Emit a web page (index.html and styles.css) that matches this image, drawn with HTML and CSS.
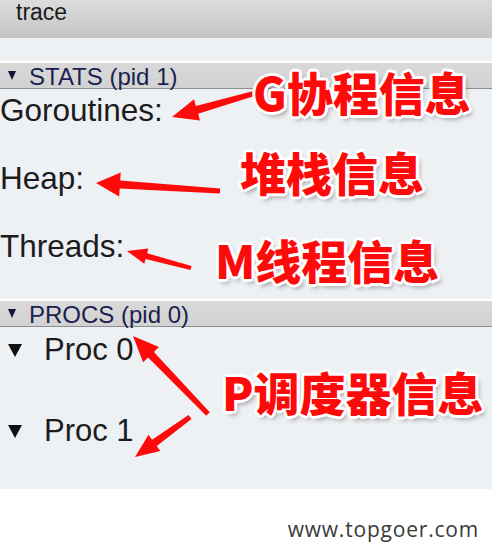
FILE: index.html
```html
<!DOCTYPE html>
<html lang="zh-CN">
<head>
<meta charset="utf-8">
<title>trace</title>
<link rel="stylesheet" href="styles.css">
</head>
<body>
<div class="page">
  <header class="topbar"><span class="title">trace</span></header>
  <main class="panel">
    <section class="section">
      <div class="section-header"><span class="caret"></span><span class="section-title">STATS (pid 1)</span></div>
      <div class="stats">
        <div class="stat">Goroutines:</div>
        <div class="stat">Heap:</div>
        <div class="stat">Threads:</div>
      </div>
    </section>
    <section class="section procs">
      <div class="section-header"><span class="caret"></span><span class="section-title">PROCS (pid 0)</span></div>
      <div class="proc-list">
        <div class="proc"><span class="proc-caret"></span><span class="proc-name">Proc 0</span></div>
        <div class="proc"><span class="proc-caret"></span><span class="proc-name">Proc 1</span></div>
      </div>
    </section>
  </main>
  <footer class="footer"><span class="watermark">www.topgoer.com</span></footer>

  <div class="annotations">
    <svg class="arrows" width="492" height="556" viewBox="0 0 492 556" xmlns="http://www.w3.org/2000/svg">
      <polygon points="255.3,90.6 195.9,106.0 194.0,99.3 172,117 200.0,120.4 198.1,113.7 256.7,95.4"/>
      <polygon points="220.16,188.5 120.21,180.56 120.72,172.57 96,183 119.18,196.53 119.69,188.54 219.84,193.5"/>
      <polygon points="191.51,266.07 147.10,253.23 148.38,248.40 127,251 144.28,263.86 145.56,259.03 190.49,269.93"/>
      <polygon points="209.80,412.27 153.90,351.97 158.95,347.12 133,336 143.09,362.36 148.14,357.51 206.20,415.73"/>
      <polygon points="188.53,414.98 152.06,439.65 148.53,434.79 135,457 160.29,450.97 156.76,446.12 191.47,419.02"/>
    </svg>
    <span class="label label-g">G协程信息</span>
    <span class="label label-heap">堆栈信息</span>
    <span class="label label-m">M线程信息</span>
    <span class="label label-p">P调度器信息</span>
  </div>
</div>
</body>
</html>
```

FILE: styles.css
```css
html, body {
  margin: 0;
  padding: 0;
  background: #ffffff;
}

.page {
  position: relative;
  width: 492px;
  height: 556px;
  overflow: hidden;
  font-family: "Liberation Sans", Arial, sans-serif;
  color: #1c1c1c;
}

.topbar {
  height: 38px;
  background: linear-gradient(#dcdcdc, #c5c5c5);
  padding-left: 16px;
  box-sizing: border-box;
}

.title {
  display: block;
  font-size: 23px;
  line-height: 24px;
  color: #1a1a1a;
}

.panel {
  height: 451px;
  background: #eef1f4;
  padding-top: 23px;
  box-sizing: border-box;
}

.section-header {
  display: flex;
  align-items: center;
  height: 25px;
  border-top: 2px solid #ffffff;
  border-bottom: 1px solid #8e8e8e;
  background: linear-gradient(#d9d9d9, #d2d2d2);
}

.caret {
  width: 0;
  height: 0;
  margin-left: 8px;
  margin-right: 13px;
  border-left: 4.5px solid transparent;
  border-right: 4.5px solid transparent;
  border-top: 9px solid #15153a;
}

.section-title {
  font-size: 24px;
  line-height: 22px;
  padding-top: 3px;
  color: #1b1f4f;
}

.stats {
  display: flex;
  flex-direction: column;
  gap: 34px;
  margin-top: 4px;
}

.stat {
  font-size: 31.5px;
  line-height: 34px;
}

.procs {
  margin-top: 36px;
}

.proc-list {
  display: flex;
  flex-direction: column;
  gap: 47px;
  margin-top: 6px;
}

.proc {
  display: flex;
  align-items: center;
  height: 34px;
}

.proc-caret {
  width: 0;
  height: 0;
  margin-left: 8px;
  margin-right: 22px;
  border-left: 7px solid transparent;
  border-right: 7px solid transparent;
  border-top: 13px solid #111111;
}

.proc-name {
  font-size: 31px;
  line-height: 34px;
}

.footer {
  height: 67px;
  display: flex;
  justify-content: flex-end;
  padding-top: 28px;
  padding-right: 13px;
  box-sizing: border-box;
}

.watermark {
  font-family: "Open Sans", "Noto Sans", sans-serif;
  font-size: 21px;
  line-height: 24px;
  letter-spacing: 0.8px;
  color: #3a3a3a;
}

.annotations {
  position: absolute;
  top: 0;
  left: 0;
  width: 492px;
  height: 556px;
  pointer-events: none;
}

.arrows {
  position: absolute;
  top: 0;
  left: 0;
}

.arrows polygon {
  fill: #ff0a0a;
}

.label {
  position: absolute;
  font-family: "Noto Sans CJK SC", "Noto Sans", sans-serif;
  font-weight: 900;
  font-size: 46px;
  line-height: 1;
  color: #ff0a0a;
  white-space: nowrap;
  text-shadow:
    3px 0 0 #fff, -3px 0 0 #fff, 0 3px 0 #fff, 0 -3px 0 #fff,
    2px 2px 0 #fff, -2px 2px 0 #fff, 2px -2px 0 #fff, -2px -2px 0 #fff,
    3px 4px 5px rgba(0, 0, 0, 0.35);
}

.label-g { left: 253px; top: 68px; }
.label-heap { left: 240px; top: 148px; }
.label-m { left: 215px; top: 236px; }
.label-p { left: 222px; top: 368px; }
```
